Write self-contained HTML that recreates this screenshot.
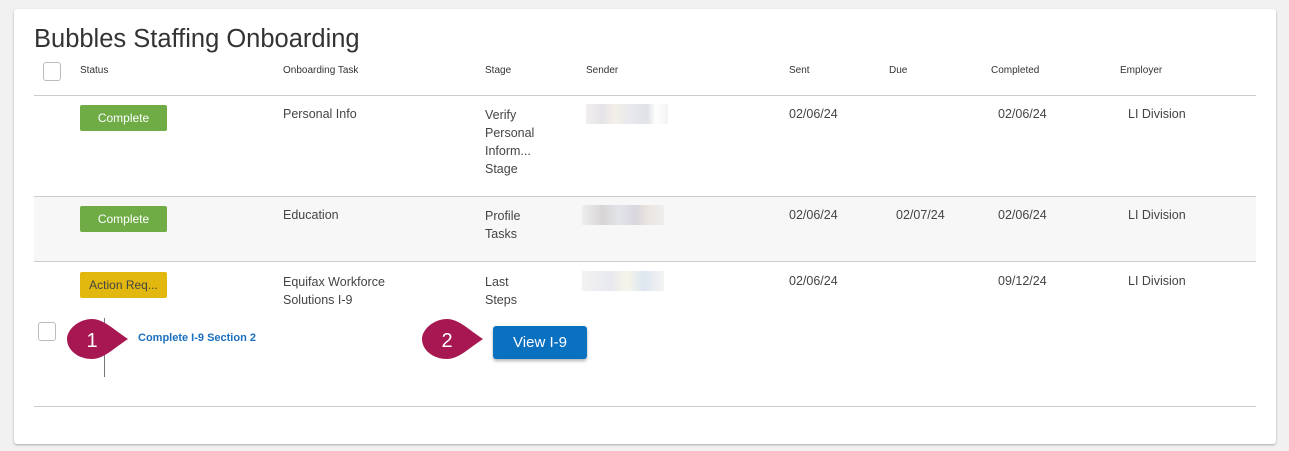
<!DOCTYPE html>
<html><head><meta charset="utf-8"><style>
*{margin:0;padding:0;box-sizing:border-box}
body{width:1289px;height:451px;background:#f1f1f1;font-family:"Liberation Sans",sans-serif;position:relative;overflow:hidden;color:#444}
.card{position:absolute;left:14px;top:9px;width:1262px;height:435px;background:#fff;border-radius:3px;box-shadow:0 1px 2px rgba(0,0,0,.3)}
.a{position:absolute;white-space:nowrap}
h1{position:absolute;left:34px;top:25px;font-size:25.5px;font-weight:normal;color:#333}
.th{font-size:10px;color:#333;top:65px}
.line{position:absolute;left:34px;width:1222px;height:1px;background:#ccc}
.td{font-size:12.5px;color:#444}
.badge{position:absolute;height:26px;width:87px;border-radius:2px;font-size:12px;text-align:center;line-height:26px}
.g{background:#6fac46;color:#fff}
.y{background:#e3b80e;color:#444}
.cb{position:absolute;width:18px;height:19px;border:1px solid #bbb;border-radius:3px;background:#fff}
.blur{position:absolute;height:20px;width:82px;background:linear-gradient(90deg,#f0eeee,#e6e3e8 20%,#f3efe8 35%,#e8e8ee 55%,#dfe2e6 75%,#fff 85%,#f3f3f1)}
</style></head><body>
<div class="card"></div>
<h1>Bubbles Staffing Onboarding</h1>
<div class="cb" style="left:43px;top:62px"></div>
<div class="a th" style="left:80px">Status</div>
<div class="a th" style="left:283px">Onboarding Task</div>
<div class="a th" style="left:485px">Stage</div>
<div class="a th" style="left:586px">Sender</div>
<div class="a th" style="left:789px">Sent</div>
<div class="a th" style="left:889px">Due</div>
<div class="a th" style="left:991px">Completed</div>
<div class="a th" style="left:1120px">Employer</div>
<div class="line" style="top:95px"></div>
<div style="position:absolute;left:34px;top:196px;width:1222px;height:65px;background:#f7f7f7"></div>
<div class="line" style="top:196px"></div>
<div class="line" style="top:261px"></div>
<div class="line" style="top:406px"></div>

<div class="badge g" style="left:80px;top:105px">Complete</div>
<div class="a td" style="left:283px;top:107px">Personal Info</div>
<div class="a td" style="left:485px;top:106px;line-height:18px">Verify<br>Personal<br>Inform...<br>Stage</div>
<div class="blur" style="left:586px;top:104px"></div>
<div class="a td" style="left:789px;top:107px">02/06/24</div>
<div class="a td" style="left:998px;top:107px">02/06/24</div>
<div class="a td" style="left:1128px;top:107px">LI Division</div>

<div class="badge g" style="left:80px;top:206px">Complete</div>
<div class="a td" style="left:283px;top:208px">Education</div>
<div class="a td" style="left:485px;top:207px;line-height:18px">Profile<br>Tasks</div>
<div class="blur" style="left:582px;top:205px;background:linear-gradient(90deg,#eee,#d8d4d6 25%,#e2e5ea 45%,#d9d6de 65%,#e9e4de 80%,#eee)"></div>
<div class="a td" style="left:789px;top:208px">02/06/24</div>
<div class="a td" style="left:896px;top:208px">02/07/24</div>
<div class="a td" style="left:998px;top:208px">02/06/24</div>
<div class="a td" style="left:1128px;top:208px">LI Division</div>

<div class="badge y" style="left:80px;top:272px">Action Req...</div>
<div class="a td" style="left:283px;top:273px;line-height:18px">Equifax Workforce<br>Solutions I-9</div>
<div class="a td" style="left:485px;top:273px;line-height:18px">Last<br>Steps</div>
<div class="blur" style="left:582px;top:271px;background:linear-gradient(90deg,#f3f3f3,#e7e8ef 35%,#f7f5ea 55%,#dde6f0 75%,#f3f3f3)"></div>
<div class="a td" style="left:789px;top:274px">02/06/24</div>
<div class="a td" style="left:998px;top:274px">09/12/24</div>
<div class="a td" style="left:1128px;top:274px">LI Division</div>

<div class="cb" style="left:38px;top:322px"></div>
<div style="position:absolute;left:104px;top:318px;width:1px;height:59px;background:#777"></div>
<div class="a" style="left:138px;top:332px;font-size:11px;color:#1a6fc0;font-weight:bold">Complete I-9 Section 2</div>
<div style="position:absolute;left:493px;top:326px;width:94px;height:33px;background:#0a70c0;border-radius:3px;box-shadow:0 2px 3px rgba(0,0,0,.3);color:#fff;font-size:15px;text-align:center;line-height:33px">View I-9</div>

<svg style="position:absolute;left:0;top:0" width="1289" height="451">
<path d="M92 319 C78 319 67 330 67 339 C67 350 78 359 92 359 C104 359 114 348 128 339 C114 330 104 319 92 319Z" fill="#a71853"/>
<text x="92" y="347" font-family="Liberation Sans" font-size="20" fill="#fff" text-anchor="middle">1</text>
<path d="M447 319 C433 319 422 330 422 339 C422 350 433 359 447 359 C459 359 469 348 483 339 C469 330 459 319 447 319Z" fill="#a71853"/>
<text x="447" y="347" font-family="Liberation Sans" font-size="20" fill="#fff" text-anchor="middle">2</text>
</svg>
</body></html>
